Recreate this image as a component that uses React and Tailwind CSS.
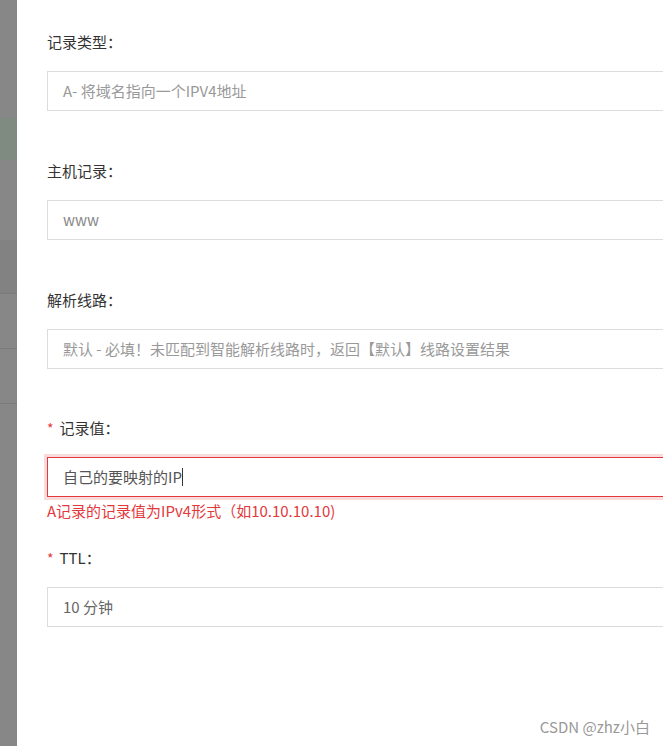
import React from "react";

const font = { fontFamily: '"Microsoft YaHei", "Noto Sans CJK SC", "Noto Sans", sans-serif' };

const Field = ({ label, required, children, className = "" }) => (
  <div className={className}>
    <div className="h-5 flex items-center text-[15px] leading-5 text-[#333]">
      {required && <span className="text-[#e4393c] mr-[6px] text-[14px]">*</span>}
      <span>{label}：</span>
    </div>
    <div className="mt-[19px]">{children}</div>
  </div>
);

const Box = ({ children, error }) => (
  <div
    className={`h-10 w-[660px] flex items-center pl-[15px] text-[15px] bg-white ${
      error
        ? "border border-[#e4393c] shadow-[0_0_0_3px_rgba(228,57,60,0.18)]"
        : "border border-[#dcdcdc]"
    }`}
  >
    {children}
  </div>
);

export default function App() {
  return (
    <div className="w-[663px] h-[746px] flex overflow-hidden bg-white relative" style={font}>
      <div className="w-[17px] shrink-0 flex flex-col bg-[#878787]">
        <div className="h-[118px]" />
        <div className="h-[42px] bg-[#7f8a80]" />
        <div className="h-[80px]" />
        <div className="h-[54px] bg-[#828282] border-b border-[#7a7a7a]" />
        <div className="h-[55px] border-b border-[#7a7a7a]" />
        <div className="h-[55px] border-b border-[#7a7a7a]" />
        <div className="flex-1" />
      </div>

      <div className="flex-1 pl-[30px] pt-[32px] overflow-hidden">
        <Field label="记录类型">
          <Box>
            <span className="text-[#999]">A- 将域名指向一个IPV4地址</span>
          </Box>
        </Field>

        <Field label="主机记录" className="mt-[50px]">
          <Box>
            <span className="text-[#8a8a8a]">www</span>
          </Box>
        </Field>

        <Field label="解析线路" className="mt-[50px]">
          <Box>
            <span className="text-[#999]">默认 - 必填！未匹配到智能解析线路时，返回【默认】线路设置结果</span>
          </Box>
        </Field>

        <Field label="记录值" required className="mt-[49px]">
          <Box error>
            <span className="text-[#555]">自己的要映射的IP</span>
            <span className="inline-block w-px h-[18px] bg-[#333]" />
          </Box>
        </Field>
        <div className="mt-[4px] h-5 leading-5 text-[15px] text-[#e4393c]">
          A记录的记录值为IPv4形式（如10.10.10.10)
        </div>

        <Field label="TTL" required className="mt-[27px]">
          <Box>
            <span className="text-[#666]">10 分钟</span>
          </Box>
        </Field>
      </div>

      <div className="absolute right-[13px] bottom-[8px] text-[15px] text-[#999]">
        CSDN @zhz小白
      </div>
    </div>
  );
}
